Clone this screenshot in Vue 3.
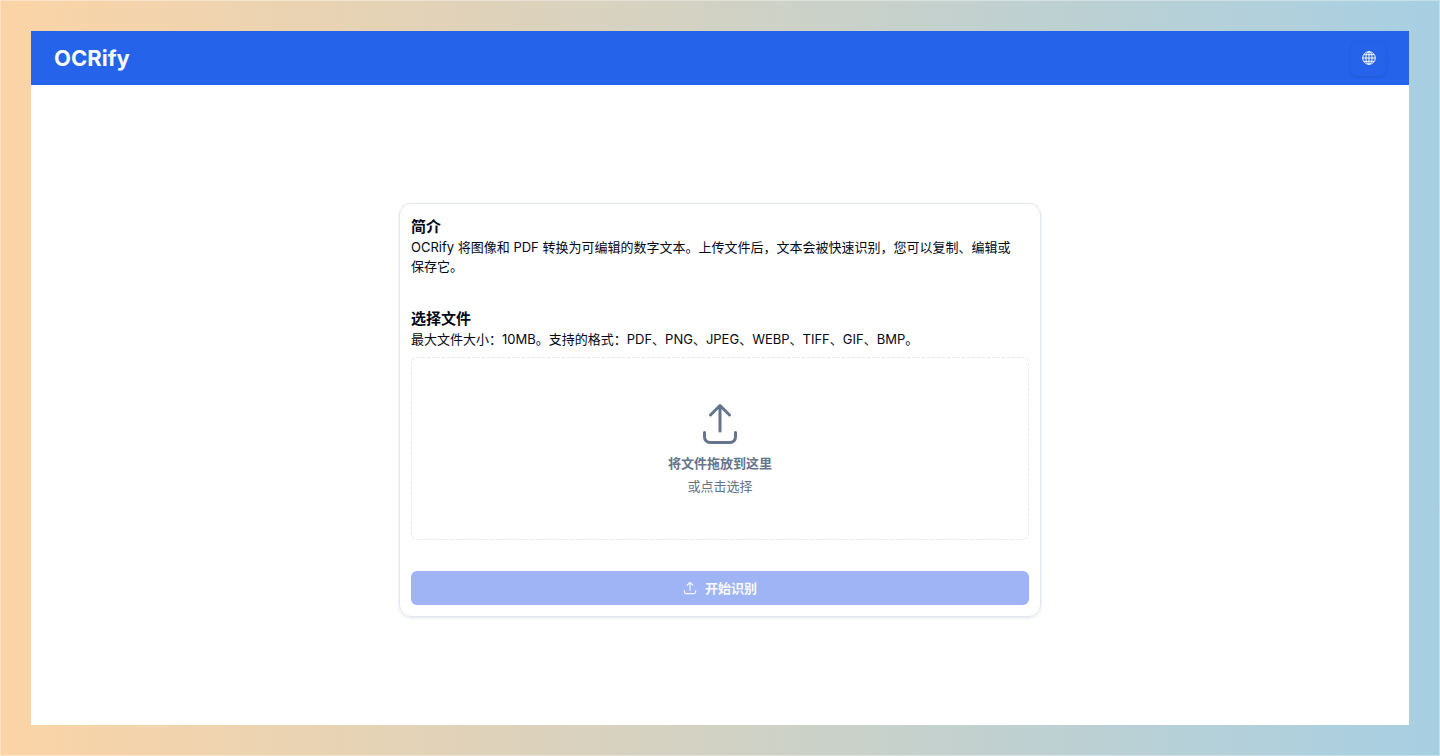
<script setup>
import { ref } from 'vue'

const fileInput = ref(null)
const file = ref(null)

function onPick(event) {
  file.value = event.target.files[0] ?? null
}

function onDrop(event) {
  file.value = event.dataTransfer.files[0] ?? null
}
</script>

<template>
  <div class="backdrop">
    <div class="window">
      <header class="topbar">
        <h1 class="brand">OCRify</h1>
        <button class="lang" type="button" aria-label="语言">
          <svg viewBox="0 0 14 14" fill="none" stroke="currentColor" stroke-width="1">
            <circle cx="7" cy="7" r="6.3" />
            <ellipse cx="7" cy="7" rx="3.1" ry="6.3" />
            <path d="M7 .7v12.6M.7 7h12.6M1.8 3.7h10.4M1.8 10.3h10.4" />
          </svg>
        </button>
      </header>

      <main class="main">
        <div class="card">
          <section>
            <h2>简介</h2>
            <p class="intro">OCRify 将图像和 PDF 转换为可编辑的数字文本。上传文件后，文本会被快速识别，您可以复制、编辑或保存它。</p>
          </section>

          <section>
            <h2>选择文件</h2>
            <p>最大文件大小：10MB。支持的格式：PDF、PNG、JPEG、WEBP、TIFF、GIF、BMP。</p>
            <button class="dropzone" type="button" @click="fileInput.click()" @dragover.prevent @drop.prevent="onDrop">
              <svg class="upload-large" viewBox="0 0 46 46" fill="none" stroke="currentColor" stroke-width="3" stroke-linecap="round" stroke-linejoin="round">
                <path d="M23 30V4.500M13.500 14 23 4.500 32.500 14M7.500 31.500V36a5.500 5.500 0 0 0 5.500 5.500h20a5.500 5.500 0 0 0 5.500-5.500v-4.500" />
              </svg>
              <strong>将文件拖放到这里</strong>
              <span>或点击选择</span>
            </button>
            <input ref="fileInput" type="file" aria-label="选择文件" hidden @change="onPick" />
          </section>

          <button class="start" type="button" :disabled="!file">
            <svg viewBox="0 0 46 46" fill="none" stroke="currentColor" stroke-width="3.6" stroke-linecap="round" stroke-linejoin="round">
              <path d="M23 30V4.500M13.500 14 23 4.500 32.500 14M4.500 31.500V36a5.500 5.500 0 0 0 5.500 5.500h26a5.500 5.500 0 0 0 5.500-5.500v-4.500" />
            </svg>
            开始识别
          </button>
        </div>
      </main>
    </div>
  </div>
</template>

<style>
body {
  margin: 0;
}
</style>

<style scoped>
.backdrop {
  box-sizing: border-box;
  min-height: 100vh;
  display: flex;
  padding: 30px;
  border: 1px solid rgba(255, 255, 255, 0.35);
  background: linear-gradient(90deg, #fbd4a6, #a7cfe2) border-box;
  font-family: Inter, "Noto Sans CJK SC", sans-serif;
  font-size: 13px;
  line-height: 19px;
  color: #020817;
}

.window {
  flex: 1;
  display: flex;
  flex-direction: column;
  background: #fff;
}

.topbar {
  box-sizing: border-box;
  height: 54px;
  display: flex;
  align-items: center;
  justify-content: space-between;
  padding: 0 23px;
  background: #2563eb;
  color: #f8fafc;
}

.brand {
  margin: 0;
  font-size: 22px;
  line-height: 30px;
  font-weight: 700;
}

.lang {
  display: grid;
  place-items: center;
  width: 35px;
  height: 35px;
  padding: 0;
  border: 0;
  border-radius: 6px;
  background: #2563eb;
  color: #f8fafc;
  box-shadow: 0 1px 3px rgba(0, 0, 0, 0.1);
}

.lang svg {
  width: 14px;
  height: 14px;
}

.main {
  flex: 1;
  display: grid;
  align-items: center;
  justify-items: center;
  padding-top: 10px;
}

.card {
  box-sizing: border-box;
  width: 100%;
  max-width: 642px;
  display: flex;
  flex-direction: column;
  gap: 31px;
  padding: 11px;
  border: 1px solid #e2e8f0;
  border-radius: 12px;
  box-shadow: 0 1px 3px rgba(0, 0, 0, 0.1);
}

h2 {
  margin: 0;
  font-size: 15px;
  line-height: 23px;
  font-weight: 600;
}

p {
  margin: 0;
}

.intro {
  padding-right: 12px;
}

.dropzone {
  box-sizing: border-box;
  width: 100%;
  display: flex;
  flex-direction: column;
  align-items: center;
  gap: 4px;
  margin-top: 8px;
  padding: 43px 12px;
  border: 1px dashed #e2e8f0;
  border-radius: 6px;
  background: transparent;
  color: #64748b;
  font: inherit;
}

.dropzone strong {
  font-weight: 600;
}

.upload-large {
  width: 46px;
  height: 46px;
  margin-bottom: 3px;
}

.start {
  display: flex;
  align-items: center;
  justify-content: center;
  gap: 8px;
  height: 34px;
  padding: 0 16px;
  border: 0;
  border-radius: 6px;
  background: #2563eb;
  color: #f8fafc;
  font: inherit;
  font-weight: 600;
}

.start:disabled {
  background: #9fb4f5;
}

.start svg {
  width: 14px;
  height: 14px;
}
</style>
